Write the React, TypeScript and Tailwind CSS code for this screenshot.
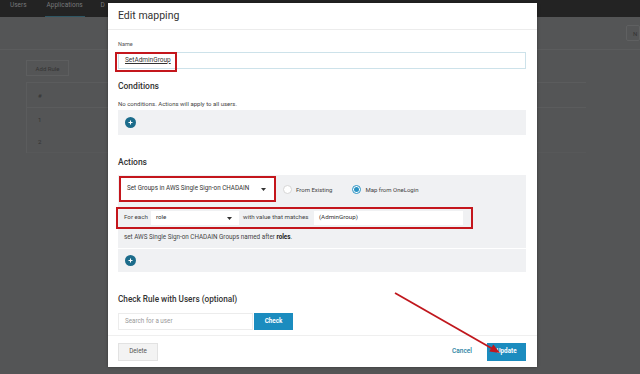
import React from "react";

const RED = "border-[#c4161c]";

function Caret() {
  return (
    <svg width="5" height="3" viewBox="0 0 5 3" className="shrink-0">
      <path d="M0 0 L5 0 L2.5 3 Z" fill="#333" />
    </svg>
  );
}

function PlusCircle() {
  return (
    <div className="w-[11px] h-[11px] rounded-full bg-[#1c6c8b] flex items-center justify-center">
      <svg width="5" height="5" viewBox="0 0 5 5">
        <path d="M2.5 0.5 V4.5 M0.5 2.5 H4.5" stroke="#fff" strokeWidth="1.1" />
      </svg>
    </div>
  );
}

export default function App() {
  return (
    <div className="relative w-[640px] h-[374px] overflow-hidden bg-[#545556] font-['Roboto',sans-serif]">
      {/* background page (dimmed) */}
      <div className="h-[17px] bg-[#232323] flex items-end text-[6.5px] text-[#77787a]">
        <div className="ml-[10px] h-full flex items-center pb-[5px]">Users</div>
        <div className="ml-[18px] h-full flex items-center pb-[5px] px-[2px] border-b border-[#2f5663]">Applications</div>
        <div className="ml-[16px] h-full flex items-center pb-[5px]">D</div>
      </div>
      <div className="h-[33px] border-b border-[#5b5c5d] flex justify-end items-start pt-[8px]">
        <div className="w-[14px] h-[16px] border border-[#5f6061] rounded-[2px] text-[6px] text-[#333] flex items-center pl-[6px]">N</div>
      </div>
      <div className="pl-[26px] pt-[10px] text-[6px] text-[#333]">
        <div className="w-[43px] h-[16px] border border-[#5d5e5f] flex items-center justify-center">Add Rule</div>
        <div className="mt-[6px] border-l border-t border-[#5b5c5d] w-[560px]">
          <div className="h-[25px] border-b border-[#5b5c5d] flex items-center pl-[11px]">#</div>
          <div className="h-[22px] flex items-center pl-[11px]">1</div>
          <div className="h-[23px] flex items-center pl-[11px] border-b border-[#575859]">2</div>
        </div>
      </div>

      {/* modal */}
      <div className="absolute left-[108px] top-[3px] w-[429px] h-[364px] bg-white flex flex-col shadow-[0_0_3px_rgba(0,0,0,0.35)]">
        <div className="h-[27px] border-b border-[#ececec] flex items-center pl-[10px] text-[10.5px] text-[#333]">
          Edit mapping
        </div>
        <div className="flex-1 pl-[10px] pr-[11px] flex flex-col">
          <div className="pt-[10px] text-[5.5px] leading-[8px] text-[#555]">Name</div>
          <div className="relative mt-[4px] h-[17px] border border-[#cde2ea] flex items-center pl-[6px] text-[6.5px] text-[#333]">
            <span className="underline">SetAdminGroup</span>
            <div className={`absolute left-[-4px] top-[-1px] w-[62px] h-[20px] border-2 ${RED}`} />
          </div>

          <div className="mt-[11px] text-[8.5px] leading-[12px] font-medium text-[#333]">Conditions</div>
          <div className="mt-[8px] text-[6px] leading-[8px] text-[#444]">No conditions. Actions will apply to all users.</div>
          <div className="mt-[2px] h-[25px] bg-[#f0f1f3] flex items-center pl-[7px]">
            <PlusCircle />
          </div>

          <div className="mt-[21px] text-[8.5px] leading-[12px] font-medium text-[#333]">Actions</div>
          <div className="mt-[7px] bg-[#f0f1f3] flex flex-col pt-[1px]">
            <div className="flex items-center">
              <div className={`ml-[1px] border-2 ${RED} h-[26px] w-[157px]`}>
                <div className="h-full bg-white flex items-center justify-between pl-[6px] pr-[8px] text-[6.3px] text-[#333]">
                  <span>Set Groups in AWS Single Sign-on CHADAIN</span>
                  <Caret />
                </div>
              </div>
              <div className="ml-[7px] w-[9px] h-[9px] rounded-full bg-white border border-[#d6d6d6]" />
              <span className="ml-[4px] text-[6px] text-[#444]">From Existing</span>
              <div className="ml-[20px] w-[9px] h-[9px] rounded-full bg-white border border-[#2a93c4] flex items-center justify-center">
                <div className="w-[5px] h-[5px] rounded-full bg-[#2a93c4]" />
              </div>
              <span className="ml-[4px] text-[6px] text-[#444]">Map from OneLogin</span>
            </div>
            <div className={`mt-[5px] ml-[-2px] w-[357px] h-[22px] border-2 ${RED} flex items-center pl-[6px] text-[6.2px] text-[#444]`}>
              <span className="w-[27px] shrink-0">For each</span>
              <div className="w-[88px] h-[14px] bg-white flex items-center justify-between pl-[5px] pr-[7px] text-[#333] shrink-0">
                <span>role</span>
                <Caret />
              </div>
              <span className="ml-[4px] w-[71px] shrink-0 whitespace-nowrap">with value that matches</span>
              <div className="w-[149px] h-[14px] bg-white flex items-center pl-[5px] text-[#333] shrink-0">(AdminGroup)</div>
            </div>
            <div className="mt-[4px] pl-[6px] text-[6.3px] leading-[8px] text-[#444]">
              set AWS Single Sign-on CHADAIN Groups named after <span className="font-bold text-[#222]">roles</span>.
            </div>
            <div className="mt-[7px] border-t border-white" />
            <div className="pl-[7px] pt-[6px] pb-[6px]">
              <PlusCircle />
            </div>
          </div>

          <div className="mt-[21px] text-[8.2px] leading-[12px] font-medium text-[#333]">Check Rule with Users (optional)</div>
          <div className="mt-[8px] flex h-[17px]">
            <div className="w-[135px] border border-[#ececec] flex items-center pl-[6px] text-[6.3px] text-[#9a9a9a]">Search for a user</div>
            <div className="ml-[1px] w-[39px] bg-[#1b8cbf] flex items-center justify-center text-[6.3px] font-bold text-white">Check</div>
          </div>
        </div>
        <div className="h-[32px] border-t border-[#efefef] flex items-center justify-between pl-[10px] pr-[11px]">
          <div className="w-[40px] h-[18px] bg-[#f3f3f3] border border-[#e2e2e2] flex items-center justify-center text-[6.3px] text-[#555]">Delete</div>
          <div className="flex items-center">
            <span className="text-[6.5px] font-medium text-[#2a7fa1]">Cancel</span>
            <div className="ml-[15px] w-[39px] h-[18px] bg-[#1b8cbf] flex items-center justify-center text-[6.3px] font-bold text-white">Update</div>
          </div>
        </div>
      </div>

      {/* annotation arrow */}
      <svg className="absolute left-0 top-0" width="640" height="374" viewBox="0 0 640 374">
        <line x1="395" y1="293" x2="492" y2="348.5" stroke="#c0171d" strokeWidth="1.8" />
        <polygon points="500,353 489.3,351.5 493.3,344.5" fill="#c0171d" />
      </svg>
    </div>
  );
}
